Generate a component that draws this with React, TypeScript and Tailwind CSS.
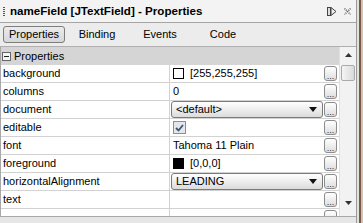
import React from "react";

const FONT = { fontFamily: '"Liberation Sans", Arial, sans-serif' };

function DotsButton({ dots = true }: { dots?: boolean }) {
  return (
    <div className="ml-auto w-[13px] h-[15px] shrink-0 rounded-[3px] border border-[#8c8c8c] bg-linear-to-b from-white to-[#dedede] flex items-end justify-center text-[9px] leading-[8px] text-[#333]">
      {dots ? "..." : null}
    </div>
  );
}

function Combo({ text }: { text: string }) {
  return (
    <div className="ml-[-2px] w-[152px] h-[17px] rounded-[3px] border border-[#7a7a7a] bg-linear-to-b from-white to-[#dcdcdc] flex items-center pl-[4px] pr-[5px]">
      <span>{text}</span>
      <svg className="ml-auto" width="8" height="5" viewBox="0 0 8 5">
        <polygon points="0,0 8,0 4,5" fill="#111" />
      </svg>
    </div>
  );
}

function Swatch({ color, text }: { color: string; text: string }) {
  return (
    <div className="flex items-center">
      <div className="w-[11px] h-[11px] border border-black" style={{ background: color }} />
      <span className="ml-[6px]">{text}</span>
    </div>
  );
}

function Check() {
  return (
    <div className="w-[13px] h-[13px] border border-[#8e8e8e] bg-[#e4e6ec] flex items-center justify-center">
      <svg width="9" height="8" viewBox="0 0 9 8">
        <path d="M1 4 L3.5 6.5 L8 1" fill="none" stroke="#3d5670" strokeWidth="1.8" />
      </svg>
    </div>
  );
}

type Row = { label: string; value: React.ReactNode; last?: boolean };

const ROWS: Row[] = [
  { label: "background", value: <Swatch color="#fff" text="[255,255,255]" /> },
  { label: "columns", value: <span>0</span> },
  { label: "document", value: <Combo text="<default>" /> },
  { label: "editable", value: <Check /> },
  { label: "font", value: <span>Tahoma 11 Plain</span> },
  { label: "foreground", value: <Swatch color="#000" text="[0,0,0]" /> },
  { label: "horizontalAlignment", value: <Combo text="LEADING" /> },
  { label: "text", value: null },
  { label: "", value: null, last: true },
];

function PropRow({ row }: { row: Row }) {
  return (
    <div className="flex h-[18px] shrink-0 border-b border-[#d2d2d2] bg-white">
      <div className="w-[169px] shrink-0 border-r border-[#d2d2d2] pl-[2px] flex items-center">
        {row.label}
      </div>
      <div className="flex-1 flex items-center pl-[3px] pr-[2px]">
        {row.value}
        <DotsButton dots={!row.last} />
      </div>
    </div>
  );
}

export default function App() {
  return (
    <div className="w-[363px] h-[223px] flex overflow-hidden text-[11px] text-black bg-[#ececec]" style={FONT}>
      <div className="w-[357px] h-full flex flex-col border-r border-[#9a9a9a]">
        {/* title bar */}
        <div className="h-[23px] shrink-0 flex items-center border-b border-[#a6a6a6] bg-[#f3f3f3]">
          <div className="ml-[3px] flex flex-col gap-[1px] mt-[1px]">
            <div className="w-[2px] h-[1px] bg-[#555]" />
            <div className="w-[2px] h-[1px] bg-[#555]" />
            <div className="w-[2px] h-[1px] bg-[#555]" />
            <div className="w-[2px] h-[1px] bg-[#555]" />
            <div className="w-[2px] h-[1px] bg-[#555]" />
          </div>
          <span className="ml-[5px] font-bold text-[11.6px]">nameField [JTextField] - Properties</span>
          <svg className="ml-auto" width="10" height="9" viewBox="0 0 10 9">
            <rect x="0.5" y="0.5" width="3" height="8" fill="#ddd" stroke="#444" />
            <polygon points="4,0.5 9,4.5 4,8.5" fill="#eee" stroke="#444" strokeWidth="1" />
          </svg>
          <svg className="ml-[7px] mr-[5px]" width="7" height="7" viewBox="0 0 7 7">
            <path d="M0.5 0.5 L6.5 6.5 M6.5 0.5 L0.5 6.5" stroke="#666" strokeWidth="1.6" strokeDasharray="1 1" />
          </svg>
        </div>

        {/* tabs */}
        <div className="h-[24px] shrink-0 flex items-center gap-[1px] pl-[3px] border-b border-[#b0b0b0] bg-[#ececec]">
          <div className="w-[62px] h-[17px] rounded-[3px] border border-[#7d7d7d] bg-linear-to-b from-[#ececec] to-[#d6d6d6] flex items-center justify-center">
            Properties
          </div>
          <div className="w-[62px] text-center">Binding</div>
          <div className="w-[62px] text-center">Events</div>
          <div className="w-[62px] text-center">Code</div>
        </div>

        {/* sheet */}
        <div className="h-[170px] shrink-0 flex border-b border-[#a8a8a8] border-l overflow-hidden">
          <div className="w-[338px] flex flex-col overflow-hidden">
            <div className="h-[18px] shrink-0 flex items-center bg-[#d5d5d5] pl-[1px]">
              <svg width="9" height="9" viewBox="0 0 9 9">
                <rect x="0.5" y="0.5" width="8" height="8" fill="#f4f4f4" stroke="#666" />
                <path d="M2 4.5 H7" stroke="#222" />
              </svg>
              <span className="ml-[3px]">Properties</span>
            </div>
            {ROWS.map((r, i) => (
              <PropRow key={i} row={r} />
            ))}
          </div>
          {/* scrollbar */}
          <div className="w-[17px] shrink-0 flex flex-col bg-[#f2f2f2] border-l border-[#e0e0e0]">
            <div className="h-[16px] flex items-center justify-center">
              <svg width="7" height="4" viewBox="0 0 7 4">
                <polygon points="0,4 7,4 3.5,0" fill="#333" />
              </svg>
            </div>
            <div className="mx-[1px] mt-[2px] h-[16px] rounded-[2px] border border-[#a9a9a9] bg-linear-to-r from-[#f4f4f4] to-[#dadada]" />
            <div className="flex-1" />
            <div className="h-[16px] mb-[5px] flex items-center justify-center">
              <svg width="7" height="4" viewBox="0 0 7 4">
                <polygon points="0,0 7,0 3.5,4" fill="#333" />
              </svg>
            </div>
          </div>
        </div>
        <div className="flex-1 bg-[#e6e6e6]" />
      </div>
      <div className="w-[2px] h-full bg-[#e4e0dc]" />
      <div className="w-[2px] h-full bg-[#7b5a44]" />
      <div className="w-[2px] h-full bg-[#cfc3b6]" />
    </div>
  );
}
